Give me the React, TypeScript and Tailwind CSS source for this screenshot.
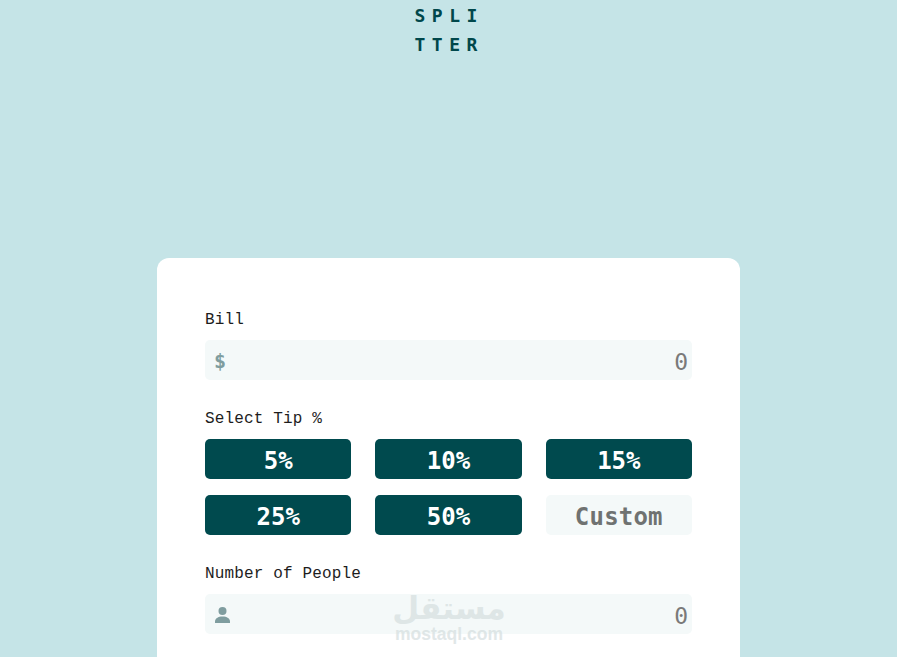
const mono = "font-['Liberation_Mono','DejaVu_Sans_Mono',monospace]";

function Label({ children }: { children: React.ReactNode }) {
  return (
    <div className={`${mono} text-[16px] leading-[24px] tracking-[0.15px] text-[#1d1d1d]`}>
      {children}
    </div>
  );
}

function Field({ icon }: { icon: React.ReactNode }) {
  return (
    <div className="flex h-10 items-center justify-between rounded-[5px] bg-[#f4f9f9] pl-[9px] pr-[4px]">
      {icon}
      <span className="pt-1 font-['DejaVu_Sans_Mono',monospace] text-[23px] leading-none text-[#7a7a7a]">0</span>
    </div>
  );
}

function PersonIcon() {
  return (
    <svg width="15" height="16" viewBox="0 0 15 16" className="ml-[1px] mt-[2px]" fill="#7f9d9f">
      <circle cx="7.5" cy="4" r="4" />
      <path d="M0 16v-1.5C0 11.5 3 9.500 7.500 9.500S15 11.500 15 14.500V16H0z" />
    </svg>
  );
}

const tips = ["5%", "10%", "15%", "25%", "50%"];

export default function App() {
  return (
    <div className="flex h-[657px] flex-col items-center overflow-hidden bg-[#c5e4e7]">
      <h1 className="mt-[1px] w-[80px] break-all pl-[6px] font-['DejaVu_Sans_Mono',monospace] text-[18px] font-bold leading-[29px] tracking-[6.5px] text-[#00474b]">
        SPLITTER
      </h1>

      <div className="relative mt-[199px] w-[583px] flex-1 rounded-t-[12px] bg-white px-12 pt-[50px]">
        <Label>Bill</Label>
        <div className="mt-[8px]">
          <Field icon={<span className="pt-[2px] font-['DejaVu_Sans_Mono',monospace] text-[20px] font-bold leading-none text-[#7f9d9f]">$</span>} />
        </div>

        <div className="mt-[27px]">
          <Label>Select Tip %</Label>
        </div>
        <div className="mt-[8px] grid grid-cols-3 gap-x-6 gap-y-4">
          {tips.map((t) => (
            <button
              key={t}
              className="h-10 rounded-[5px] bg-[#004a4e] pt-1 font-['DejaVu_Sans_Mono',monospace] text-[24px] font-bold leading-none text-white"
            >
              {t}
            </button>
          ))}
          <button className="h-10 rounded-[5px] bg-[#f4f9f9] pt-1 font-['DejaVu_Sans_Mono',monospace] text-[24px] font-bold leading-none tracking-[0.2px] text-[#6f7271]">
            Custom
          </button>
        </div>

        <div className="mt-[27px]">
          <Label>Number of People</Label>
        </div>
        <div className="mt-[8px]">
          <Field icon={<PersonIcon />} />
        </div>

        <div className="absolute left-[236px] top-[334px] flex w-[112px] flex-col items-center text-[#d5dedf] opacity-70">
          <span className="font-['DejaVu_Sans',sans-serif] text-[31px] font-bold leading-[33px]" dir="rtl">مستقل</span>
          <span className="font-['Liberation_Sans',sans-serif] text-[17.5px] font-bold leading-[18px]">mostaql.com</span>
        </div>
      </div>
    </div>
  );
}
